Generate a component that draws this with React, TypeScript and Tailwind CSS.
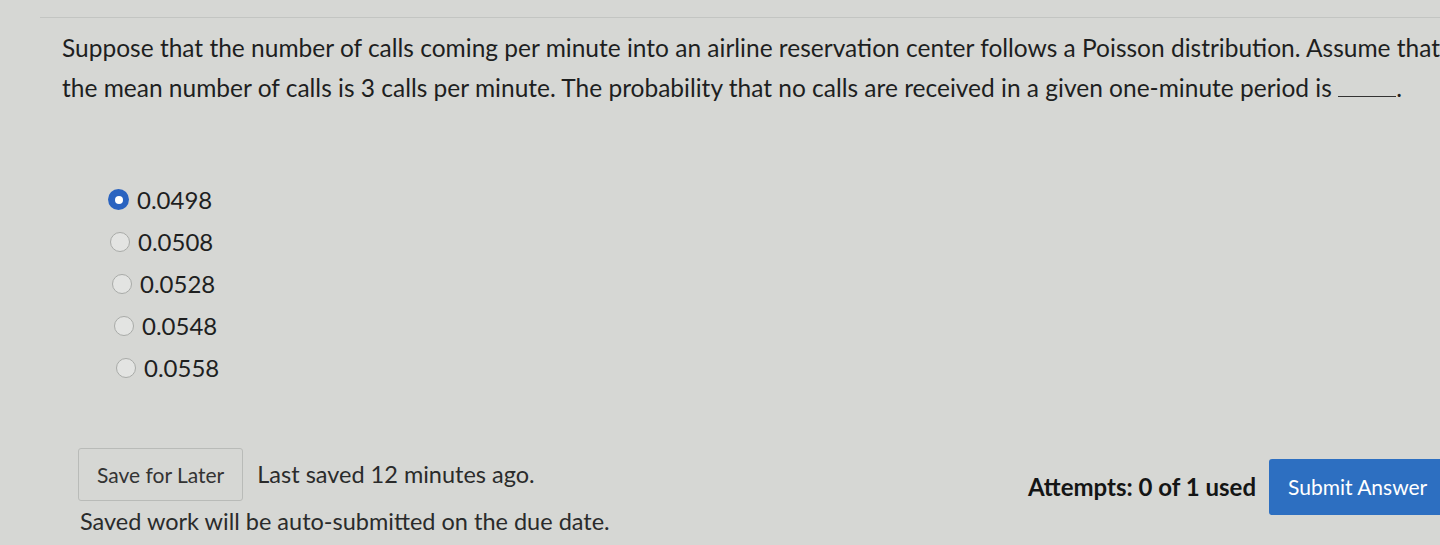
import React from 'react';

const options = ['0.0498', '0.0508', '0.0528', '0.0548', '0.0558'];

const Radio: React.FC<{ checked: boolean }> = ({ checked }) =>
  checked ? (
    <span className="w-[21px] h-[21px] rounded-full bg-[#2a63c0] flex items-center justify-center">
      <span className="w-[8px] h-[8px] rounded-full bg-white" />
    </span>
  ) : (
    <span className="w-[20px] h-[20px] rounded-full border-[1.5px] border-[#a9aba8] bg-[#e3e4e2]" />
  );

const App: React.FC = () => {
  return (
    <div
      className="w-[1440px] h-[545px] overflow-hidden bg-[#d6d7d4] text-[#1e1f1f] flex flex-col"
      style={{ fontFamily: 'Lato, "Open Sans", sans-serif' }}
    >
      <div className="ml-[40px] mt-[17px] border-t border-[#c3c5c2]" />
      <p className="ml-[62px] mt-[10px] text-[24.5px] leading-[40px] whitespace-nowrap">
        Suppose that the number of calls coming per minute into an airline reservation center follows a Poisson distribution. Assume that
        <br />
        the mean number of calls is 3 calls per minute. The probability that no calls are received in a given one-minute period is{' '}
        <span className="inline-block w-[58px] border-b border-[#333] align-baseline" />.
      </p>

      <div className="ml-[108px] mt-[77px] flex flex-col gap-[13px]">
        {options.map((o, i) => (
          <label key={o} className="flex items-center gap-[8px] h-[29px]" style={{ marginLeft: i * 2 }}>
            <Radio checked={i === 0} />
            <span className="text-[24px] leading-none">{o}</span>
          </label>
        ))}
      </div>

      <div className="mt-[66px] flex items-start justify-between">
        <div className="ml-[78px] flex flex-col">
          <div className="flex items-center gap-[14px]">
            <button className="h-[53px] px-[18px] border border-[#b9bbb8] rounded-[3px] text-[21px] text-[#333]">
              Save for Later
            </button>
            <span className="text-[23.5px] text-[#2a2b2b]">Last saved 12 minutes ago.</span>
          </div>
          <p className="mt-[3px] ml-[2px] text-[23.5px] text-[#2a2b2b]">Saved work will be auto-submitted on the due date.</p>
        </div>
        <div className="mt-[11px] flex items-center gap-[13px]">
          <span className="text-[24px] font-bold text-[#141515]">Attempts: 0 of 1 used</span>
          <button className="h-[56px] w-[171px] pl-[19px] text-left rounded-l-[3px] bg-[#2d6fc1] text-white text-[21px]">
            Submit Answer
          </button>
        </div>
      </div>
    </div>
  );
};

export default App;
